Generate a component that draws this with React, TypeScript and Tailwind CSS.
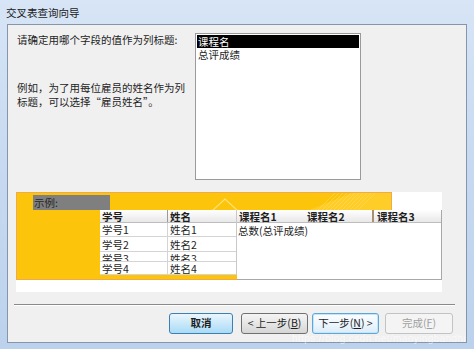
export default function App() {
  const font = "font-['Microsoft_YaHei','Noto_Sans_CJK_SC',sans-serif]";
  const btn =
    "h-[21px] rounded-[3px] border flex items-center justify-center text-[10.5px] leading-none";
  return (
    <div
      className={`w-[474px] h-[349px] relative overflow-hidden bg-gradient-to-b from-[#d7e5f6] via-[#c6d9f0] to-[#bcd2ec] ${font} text-[10.5px] text-[#1e1e1e] flex flex-col px-[7px] pb-[6px]`}
    >
      {/* title bar */}
      <div className="h-[24px] flex items-center -ml-px pt-px text-[#1a1a1a]">交叉表查询向导</div>

      {/* client area */}
      <div className="flex-1 border border-[#8595ab] bg-[#f0f0f0] flex flex-col">
        {/* top section */}
        <div className="flex mt-[8px] pl-[9px] h-[147px]">
          <div className="w-[178px] flex flex-col">
            <div className="leading-[14px]">请确定用哪个字段的值作为列标题:</div>
            <div className="leading-[14px] mt-[34px] pr-[8px]">
              例如，为了用每位雇员的姓名作为列标题，可以选择“雇员姓名”。
            </div>
          </div>
          <div className="w-[166px] h-[147px] border border-[#9a9a9a] bg-white p-px flex flex-col">
            <div className="h-[13px] leading-[13px] bg-black text-white pl-px">课程名</div>
            <div className="h-[14px] leading-[14px] pl-px">总评成绩</div>
          </div>
        </div>

        {/* example panel */}
        <div className="ml-[8px] mt-[12px] w-[426px] h-[100px] bg-white flex flex-col">
          <div className="relative w-[376px] h-[18px] bg-[#fcc50b] border-t border-l border-r border-[#f2a94a] overflow-hidden">
            <svg className="absolute inset-0" width="376" height="18" viewBox="0 0 376 18">
              <polyline points="195,18 208,6 221,18" fill="none" stroke="#ffe27a" strokeWidth="1.2" />
              <polygon points="290,18 335,0 376,0 376,18" fill="#ffd23a" opacity="0.6" />
              {[0, 4, 8, 12, 16, 20, 24, 28, 32, 36, 40].map((d) => (
                <line key={d} x1={300 + d} y1={18} x2={318 + d} y2={0} stroke="#ffe07a" strokeWidth="0.6" opacity="0.7" />
              ))}
            </svg>
            <div className="absolute left-[16px] top-[2px] w-[77px] h-[16px] bg-[#7f7f7f] text-[#262626] leading-[15px] pl-px">
              示例:
            </div>
          </div>
          <div className="flex h-[70px]">
            <div className="w-[221px] h-[70px] bg-[#fcc50b] border-l border-b border-[#f2a94a] flex items-start">
              <div className="w-[83px]" />
              <div className="w-[137px] bg-white flex flex-col border-r border-[#c8c8c8]">
                <div className="h-[13px] flex bg-gradient-to-b from-[#ffffff] to-[#e8e8e8] border-b border-[#bdbdbd] font-bold leading-[13px]">
                  <div className="w-[68px] pl-[2px] border-r border-[#9a9a9a]">学号</div>
                  <div className="flex-1 pl-[2px]">姓名</div>
                </div>
                {[
                  ["学号1", "姓名1", "h-[14px]", "leading-[14px]"],
                  ["学号2", "姓名2", "h-[15px]", "leading-[15px]"],
                  ["学号3", "姓名3", "h-[10px]", "leading-[14px]"],
                  ["学号4", "姓名4", "h-[13px]", "leading-[13px]"],
                ].map(([a, b, h, lh]) => (
                  <div key={a} className={`${h} flex border-b border-[#d4d4d4] overflow-hidden`}>
                    <div className={`w-[68px] pl-[2px] border-r border-[#d4d4d4] ${lh}`}>{a}</div>
                    <div className={`flex-1 pl-[2px] ${lh}`}>{b}</div>
                  </div>
                ))}
              </div>
            </div>
            <div className="w-[206px] h-[70px] bg-white border-r border-b border-[#a8a8a8] flex flex-col">
              <div className="h-[13px] flex bg-gradient-to-b from-[#ffffff] to-[#e8e8e8] border-b border-[#bdbdbd] font-bold leading-[13px]">
                <div className="w-[68px] pl-[2px]">课程名1</div>
                <div className="w-[67px] pl-[2px]">课程名2</div>
                <div className="flex-1 pl-[3px] border-l-2 border-[#a89070]">课程名3</div>
              </div>
              <div className="leading-[14px] pl-px mt-px">总数(总评成绩)</div>
            </div>
          </div>
        </div>

        {/* separator */}
        <div className="ml-[6px] mt-[12px] w-[441px] h-[2px] border-t border-[#8a8a8a] border-b border-b-white" />

        {/* buttons */}
        <div className="flex mt-[7px] ml-[161px]">
          <div className={`${btn} w-[64px] border-[#3c7fb1] bg-gradient-to-b from-[#eaf6fd] via-[#c9e8fa] to-[#a9dbf6] font-semibold`}>
            取消
          </div>
          <div className={`${btn} w-[67px] ml-[8px] border-[#707070] bg-gradient-to-b from-[#f4f4f4] via-[#e6e6e6] to-[#d5d5d5]`}>
            &lt; 上一步(<span className="underline">B</span>)
          </div>
          <div className={`${btn} w-[67px] ml-[4px] border-[#5aa7d8] bg-gradient-to-b from-[#fafdff] via-[#eef7fd] to-[#dcecf8] shadow-[inset_0_0_0_1px_#c6e5f8]`}>
            下一步(<span className="underline">N</span>) &gt;
          </div>
          <div className={`${btn} w-[68px] ml-[6px] border-[#c0c4c7] bg-[#f4f4f4] text-[#a0a0a0]`}>
            完成(<span className="underline">F</span>)
          </div>
        </div>
      </div>

      <div className="absolute left-[292px] top-[333px] text-[10px] leading-[12px] text-white/60 font-['Liberation_Sans',sans-serif] tracking-[0.4px]">
        https://blog.csdn.net/maoyingbandhi
      </div>
    </div>
  );
}
